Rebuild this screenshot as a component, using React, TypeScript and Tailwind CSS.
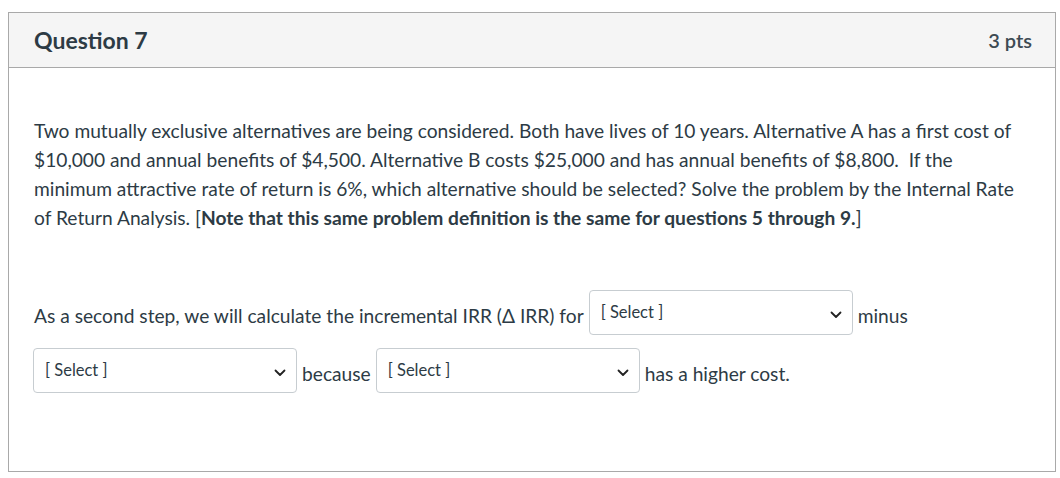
import React from "react";

function Chevron() {
  return (
    <svg width="12" height="8" viewBox="0 0 12 8" className="shrink-0">
      <path d="M1.5 1.5 L6 6 L10.5 1.5" fill="none" stroke="#222" strokeWidth="1.8" strokeLinecap="round" strokeLinejoin="round" />
    </svg>
  );
}

function SelectBox() {
  return (
    <div className="w-[264px] h-[45px] shrink-0 border border-[#c7cdd1] rounded-[4px] bg-white flex justify-between pl-[11px] pr-[10px]">
      <span className="text-[16.5px] leading-[20px] pt-[11px] text-[#2d3b45]">[ Select ]</span>
      <div className="pt-[20px]">
        <Chevron />
      </div>
    </div>
  );
}

export default function App() {
  return (
    <div className="w-[1060px] h-[478px] bg-white pt-[12px] pl-[8px] font-['Lato','Liberation_Sans',sans-serif] text-[#2d3b45]">
      <div className="w-[1048px] h-[460px] border border-[#a9a9a9]">
        {/* header */}
        <div className="h-[55px] bg-[#f5f5f5] border-b border-[#a9a9a9] flex items-center justify-between pl-[25px] pr-[23px]">
          <div className="text-[23px] font-bold">Question 7</div>
          <div className="text-[20px] font-semibold text-[#3d4a53]">3 pts</div>
        </div>
        {/* body */}
        <div className="px-[25px] pt-[48px] text-[19.2px] leading-[29px]">
          <p>
            Two mutually exclusive alternatives are being considered. Both have lives of 10 years. Alternative A has a first cost of $10,000 and annual benefits of $4,500. Alternative B costs $25,000 and has annual benefits of $8,800.&nbsp; If the minimum attractive rate of return is 6%, which alternative should be selected? Solve the problem by the Internal Rate of Return Analysis. [<strong>Note that this same problem definition is the same for questions 5 through 9.</strong>]
          </p>
          <div className="mt-[58px] flex items-center gap-[5px]">
            <span className="pt-[6px]">As a second step, we will calculate the incremental IRR (Δ IRR) for</span>
            <SelectBox />
            <span className="pt-[6px]">minus</span>
          </div>
          <div className="mt-[13px] flex items-center gap-[5px] -ml-[1px]">
            <SelectBox />
            <span className="pt-[6px]">because</span>
            <SelectBox />
            <span className="pt-[6px]">has a higher cost.</span>
          </div>
        </div>
      </div>
    </div>
  );
}
